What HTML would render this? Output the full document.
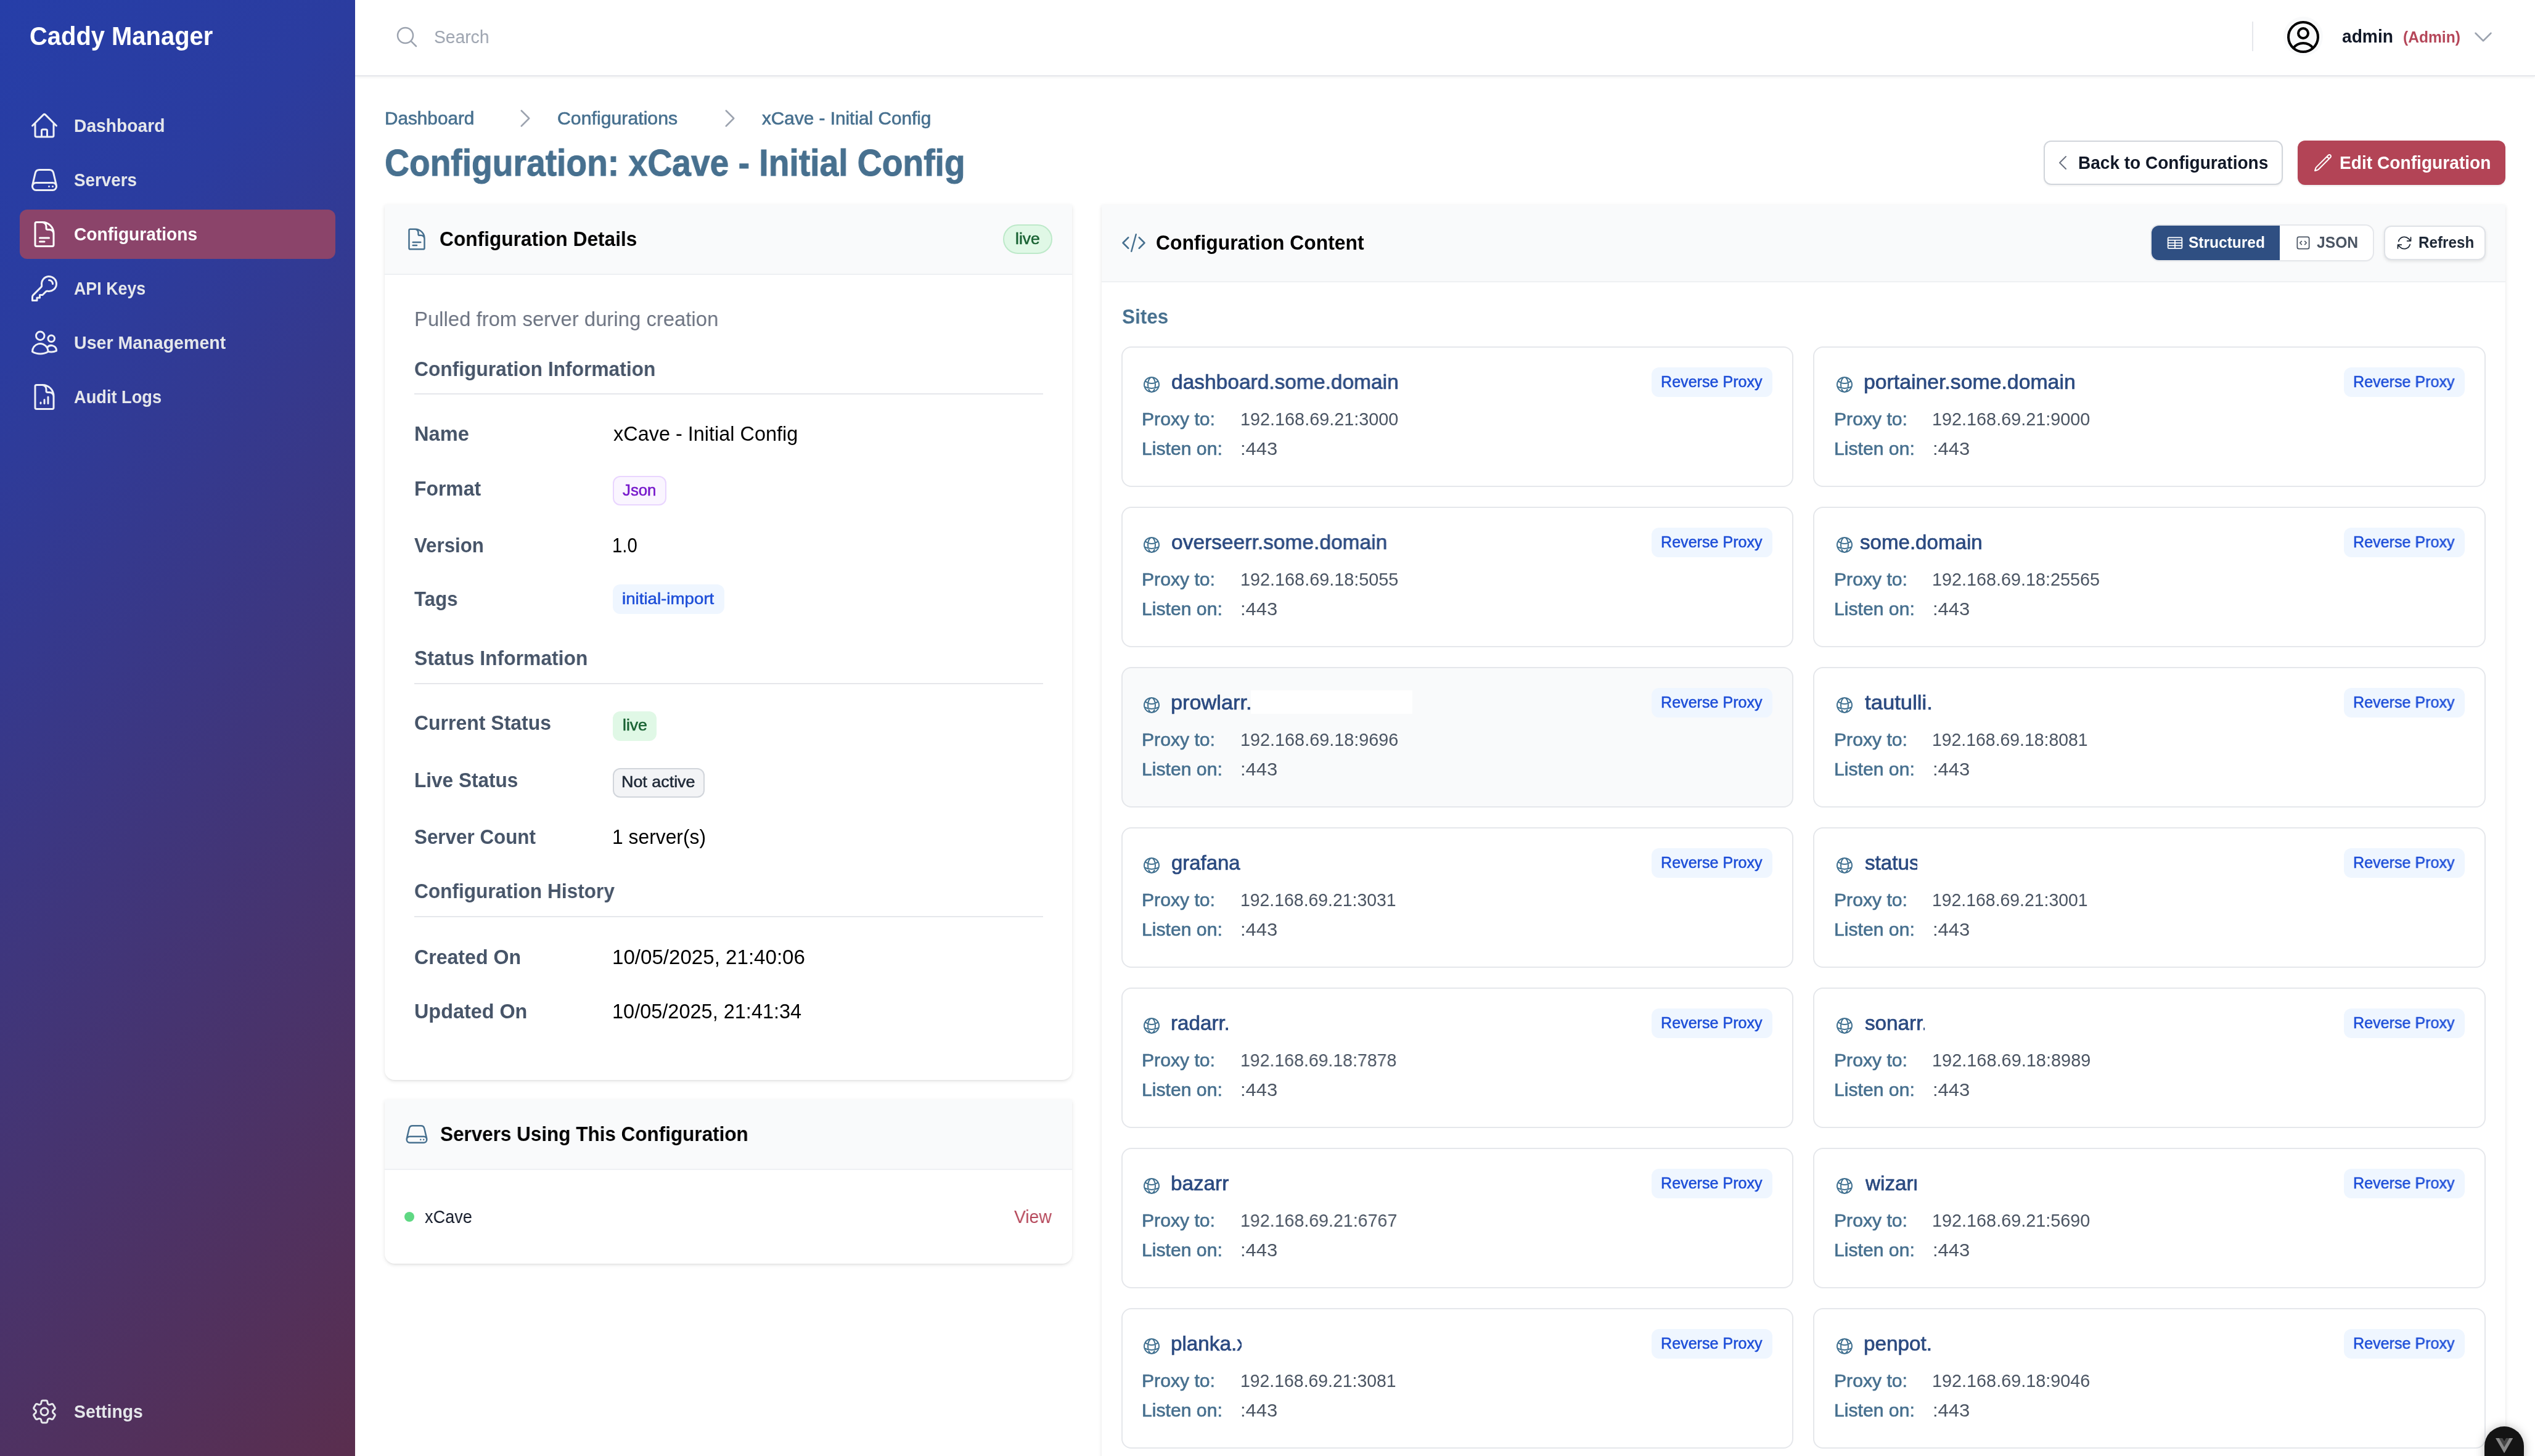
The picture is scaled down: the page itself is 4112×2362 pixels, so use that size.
<!DOCTYPE html><html><head><meta charset="utf-8"><meta name="viewport" content="width=4112"><title>Caddy Manager</title><style>html,body{margin:0;padding:0}body{width:4112px;height:2362px;overflow:hidden;position:relative;background:#fff;font-family:"Liberation Sans",sans-serif;}.t{position:absolute;line-height:1;white-space:pre}.t span{display:inline-block;transform-origin:0 50%}#w{position:absolute;left:0;top:0;width:4112px;height:2362px;overflow:hidden;will-change:transform}</style></head><body><div id="w">
<div style="position:absolute;left:0px;top:0px;width:576px;height:2362px;background:linear-gradient(135deg,#263ea8 0%,#2b3c9f 20%,#5a2e4e 100%);"></div>
<svg style="position:absolute;left:48px;top:180px;" width="48" height="48" viewBox="0 0 24 24" fill="none" stroke="#eef0f6" stroke-width="1.5" stroke-linecap="round" stroke-linejoin="round"><path d="m2.25 12 8.954-8.955c.44-.439 1.152-.439 1.591 0L21.75 12M4.5 9.75v10.125c0 .621.504 1.125 1.125 1.125H9.75v-4.875c0-.621.504-1.125 1.125-1.125h2.25c.621 0 1.125.504 1.125 1.125V21h4.125c.621 0 1.125-.504 1.125-1.125V9.75M8.25 21h8.25"/></svg>
<svg style="position:absolute;left:48px;top:268px;" width="48" height="48" viewBox="0 0 24 24" fill="none" stroke="#eef0f6" stroke-width="1.5" stroke-linecap="round" stroke-linejoin="round"><path d="M21.75 17.25v-.228a4.5 4.5 0 0 0-.12-1.03l-2.268-9.64a3.375 3.375 0 0 0-3.285-2.602H7.923a3.375 3.375 0 0 0-3.285 2.602l-2.268 9.64a4.5 4.5 0 0 0-.12 1.03v.228m19.5 0a3 3 0 0 1-3 3H5.25a3 3 0 0 1-3-3m19.5 0a3 3 0 0 0-3-3H5.25a3 3 0 0 0-3 3m16.5 0h.008v.008h-.008v-.008Zm-3 0h.008v.008h-.008v-.008Z"/></svg>
<div style="position:absolute;left:32px;top:340px;width:512px;height:80px;background:#8b446a;border-radius:12px;"></div>
<svg style="position:absolute;left:48px;top:356px;" width="48" height="48" viewBox="0 0 24 24" fill="none" stroke="#fff" stroke-width="1.5" stroke-linecap="round" stroke-linejoin="round"><path d="M19.5 14.25v-2.625a3.375 3.375 0 0 0-3.375-3.375h-1.5A1.125 1.125 0 0 1 13.5 7.125v-1.5a3.375 3.375 0 0 0-3.375-3.375H8.25m0 12.75h7.5m-7.5 3H12M10.5 2.25H5.625c-.621 0-1.125.504-1.125 1.125v17.25c0 .621.504 1.125 1.125 1.125h12.75c.621 0 1.125-.504 1.125-1.125V11.25a9 9 0 0 0-9-9Z"/></svg>
<svg style="position:absolute;left:48px;top:444px;" width="48" height="48" viewBox="0 0 24 24" fill="none" stroke="#eef0f6" stroke-width="1.5" stroke-linecap="round" stroke-linejoin="round"><path d="M15.75 5.25a3 3 0 0 1 3 3m3 0a6 6 0 0 1-7.029 5.912c-.563-.097-1.159.026-1.563.43L10.5 17.25H8.25v2.25H6v2.25H2.25v-2.818c0-.597.237-1.17.659-1.591l6.499-6.499c.404-.404.527-1 .43-1.563A6 6 0 1 1 21.75 8.25Z"/></svg>
<svg style="position:absolute;left:48px;top:532px;" width="48" height="48" viewBox="0 0 24 24" fill="none" stroke="#eef0f6" stroke-width="1.5" stroke-linecap="round" stroke-linejoin="round"><path d="M15 19.128a9.38 9.38 0 0 0 2.625.372 9.337 9.337 0 0 0 4.121-.952 4.125 4.125 0 0 0-7.533-2.493M15 19.128v-.003c0-1.113-.285-2.16-.786-3.07M15 19.128v.106A12.318 12.318 0 0 1 8.624 21c-2.331 0-4.512-.645-6.374-1.766l-.001-.109a6.375 6.375 0 0 1 11.964-3.07M12 6.375a3.375 3.375 0 1 1-6.75 0 3.375 3.375 0 0 1 6.75 0Zm8.25 2.25a2.625 2.625 0 1 1-5.25 0 2.625 2.625 0 0 1 5.25 0Z"/></svg>
<svg style="position:absolute;left:48px;top:620px;" width="48" height="48" viewBox="0 0 24 24" fill="none" stroke="#eef0f6" stroke-width="1.5" stroke-linecap="round" stroke-linejoin="round"><path d="M19.5 14.25v-2.625a3.375 3.375 0 0 0-3.375-3.375h-1.5A1.125 1.125 0 0 1 13.5 7.125v-1.5a3.375 3.375 0 0 0-3.375-3.375H8.25M9 16.5v.75m3-3v3M15 12v5.25m-4.5-15H5.625c-.621 0-1.125.504-1.125 1.125v17.25c0 .621.504 1.125 1.125 1.125h12.75c.621 0 1.125-.504 1.125-1.125V11.25a9 9 0 0 0-9-9Z"/></svg>
<svg style="position:absolute;left:48px;top:2266px;" width="48" height="48" viewBox="0 0 24 24" fill="none" stroke="#e5e7eb" stroke-width="1.5" stroke-linecap="round" stroke-linejoin="round"><path d="M9.594 3.94c.09-.542.56-.94 1.11-.94h2.593c.55 0 1.02.398 1.11.94l.213 1.281c.063.374.313.686.645.87.074.04.147.083.22.127.325.196.72.257 1.075.124l1.217-.456a1.125 1.125 0 0 1 1.37.49l1.296 2.247a1.125 1.125 0 0 1-.26 1.431l-1.003.827c-.293.241-.438.613-.43.992a7.723 7.723 0 0 1 0 .255c-.008.378.137.75.43.991l1.004.827c.424.35.534.955.26 1.43l-1.298 2.247a1.125 1.125 0 0 1-1.369.491l-1.217-.456c-.355-.133-.75-.072-1.076.124a6.47 6.47 0 0 1-.22.128c-.331.183-.581.495-.644.869l-.213 1.281c-.09.543-.56.94-1.11.94h-2.594c-.55 0-1.019-.398-1.11-.94l-.213-1.281c-.062-.374-.312-.686-.644-.87a6.52 6.52 0 0 1-.22-.127c-.325-.196-.72-.257-1.076-.124l-1.217.456a1.125 1.125 0 0 1-1.369-.49l-1.297-2.247a1.125 1.125 0 0 1 .26-1.431l1.004-.827c.292-.24.437-.613.43-.991a6.932 6.932 0 0 1 0-.255c.007-.38-.138-.751-.43-.992l-1.004-.827a1.125 1.125 0 0 1-.26-1.43l1.297-2.247a1.125 1.125 0 0 1 1.37-.491l1.216.456c.356.133.751.072 1.076-.124.072-.044.146-.086.22-.128.332-.183.582-.495.644-.869l.214-1.28Z"/><path d="M15 12a3 3 0 1 1-6 0 3 3 0 0 1 6 0Z"/></svg>
<div style="position:absolute;left:576px;top:0px;width:3536px;height:122px;background:#fff;border-bottom:2px solid #e5e7eb;box-shadow:0 2px 4px rgba(0,0,0,.05);"></div>
<svg style="position:absolute;left:640px;top:40px;" width="40" height="40" viewBox="0 0 24 24" fill="none" stroke="#9ca3af" stroke-width="1.5" stroke-linecap="round" stroke-linejoin="round"><path d="m21 21-5.197-5.197m0 0A7.5 7.5 0 1 0 5.196 5.196a7.5 7.5 0 0 0 10.607 10.607Z"/></svg>
<div style="position:absolute;left:3653px;top:35px;width:2px;height:48px;background:#e5e7eb;"></div>
<div style="position:absolute;left:3704px;top:27px;width:64px;height:64px;background:#f9fafb;border-radius:50%;"></div>
<svg style="position:absolute;left:3704px;top:28px;" width="64" height="64" viewBox="0 0 24 24" fill="none" stroke="#000" stroke-width="1.5" stroke-linecap="round" stroke-linejoin="round"><path d="M17.982 18.725A7.488 7.488 0 0 0 12 15.75a7.488 7.488 0 0 0-5.982 2.975m11.963 0a9 9 0 1 0-11.963 0m11.963 0A8.966 8.966 0 0 1 12 21a8.966 8.966 0 0 1-5.982-2.275M15 9.75a3 3 0 1 1-6 0 3 3 0 0 1 6 0Z"/></svg>
<svg style="position:absolute;left:4008px;top:40px;" width="40" height="40" viewBox="0 0 24 24" fill="none" stroke="#9ca3af" stroke-width="1.5" stroke-linecap="round" stroke-linejoin="round"><path d="m19.5 8.25-7.5 7.5-7.5-7.5"/></svg>
<svg style="position:absolute;left:832px;top:172px;" width="40" height="40" viewBox="0 0 24 24" fill="none" stroke="#9ca3af" stroke-width="1.5" stroke-linecap="round" stroke-linejoin="round"><path d="m8.25 4.5 7.5 7.5-7.5 7.5"/></svg>
<svg style="position:absolute;left:1164px;top:172px;" width="40" height="40" viewBox="0 0 24 24" fill="none" stroke="#9ca3af" stroke-width="1.5" stroke-linecap="round" stroke-linejoin="round"><path d="m8.25 4.5 7.5 7.5-7.5 7.5"/></svg>
<div style="position:absolute;left:3315px;top:228px;width:388px;height:72px;background:#fff;border:2px solid #d1d5db;border-radius:12px;box-sizing:border-box;box-shadow:0 2px 3px rgba(0,0,0,.05);"></div>
<svg style="position:absolute;left:3330px;top:248px;" width="32" height="32" viewBox="0 0 24 24" fill="none" stroke="#6b7280" stroke-width="1.5" stroke-linecap="round" stroke-linejoin="round"><path d="M15.75 19.5 8.25 12l7.5-7.5"/></svg>
<div style="position:absolute;left:3727px;top:228px;width:337px;height:72px;background:#b34456;border-radius:12px;box-shadow:0 2px 3px rgba(0,0,0,.08);"></div>
<svg style="position:absolute;left:3752px;top:248px;" width="32" height="32" viewBox="0 0 24 24" fill="none" stroke="#fff" stroke-width="1.5" stroke-linecap="round" stroke-linejoin="round"><path d="m16.862 4.487 1.687-1.688a1.875 1.875 0 1 1 2.652 2.652L6.832 19.82a4.5 4.5 0 0 1-1.897 1.13l-2.685.8.8-2.685a4.5 4.5 0 0 1 1.13-1.897L16.863 4.487Zm0 0L19.5 7.125"/></svg>
<div style="position:absolute;left:624px;top:332px;width:1115px;height:1420px;background:#fff;border-radius:0 0 16px 16px;box-shadow:0 2px 6px rgba(0,0,0,.1),0 2px 4px -2px rgba(0,0,0,.1);"><div style="height:114px;background:#f9fafb;border-bottom:2px solid #eef0f3;box-sizing:border-box;"></div></div>
<svg style="position:absolute;left:656px;top:368px;" width="40" height="40" viewBox="0 0 24 24" fill="none" stroke="#47708f" stroke-width="1.5" stroke-linecap="round" stroke-linejoin="round"><path d="M19.5 14.25v-2.625a3.375 3.375 0 0 0-3.375-3.375h-1.5A1.125 1.125 0 0 1 13.5 7.125v-1.5a3.375 3.375 0 0 0-3.375-3.375H8.25m0 12.75h7.5m-7.5 3H12M10.5 2.25H5.625c-.621 0-1.125.504-1.125 1.125v17.25c0 .621.504 1.125 1.125 1.125h12.75c.621 0 1.125-.504 1.125-1.125V11.25a9 9 0 0 0-9-9Z"/></svg>
<div style="position:absolute;left:1627px;top:364px;width:80px;height:48px;background:#e0f8e6;border:2px solid #bde9c9;border-radius:24px;box-sizing:border-box;"></div>
<div style="position:absolute;left:672px;top:638px;width:1020px;height:2px;background:#e5e7eb;"></div>
<div style="position:absolute;left:994px;top:772px;width:87px;height:48px;background:#faf5ff;border:2px solid #e9d5ff;border-radius:12px;box-sizing:border-box;"></div>
<div style="position:absolute;left:994px;top:948px;width:181px;height:48px;background:#eff6ff;border-radius:12px;"></div>
<div style="position:absolute;left:672px;top:1108px;width:1020px;height:2px;background:#e5e7eb;"></div>
<div style="position:absolute;left:994px;top:1154px;width:71px;height:48px;background:#e0f8e6;border-radius:12px;"></div>
<div style="position:absolute;left:994px;top:1246px;width:149px;height:48px;background:#f3f4f6;border:2px solid #d1d5db;border-radius:12px;box-sizing:border-box;"></div>
<div style="position:absolute;left:672px;top:1486px;width:1020px;height:2px;background:#e5e7eb;"></div>
<div style="position:absolute;left:624px;top:1784px;width:1115px;height:266px;background:#fff;border-radius:0 0 16px 16px;box-shadow:0 2px 6px rgba(0,0,0,.1),0 2px 4px -2px rgba(0,0,0,.1);"><div style="height:114px;background:#f9fafb;border-bottom:2px solid #eef0f3;box-sizing:border-box;"></div></div>
<svg style="position:absolute;left:656px;top:1820px;" width="40" height="40" viewBox="0 0 24 24" fill="none" stroke="#47708f" stroke-width="1.5" stroke-linecap="round" stroke-linejoin="round"><path d="M21.75 17.25v-.228a4.5 4.5 0 0 0-.12-1.03l-2.268-9.64a3.375 3.375 0 0 0-3.285-2.602H7.923a3.375 3.375 0 0 0-3.285 2.602l-2.268 9.64a4.5 4.5 0 0 0-.12 1.03v.228m19.5 0a3 3 0 0 1-3 3H5.25a3 3 0 0 1-3-3m19.5 0a3 3 0 0 0-3-3H5.25a3 3 0 0 0-3 3m16.5 0h.008v.008h-.008v-.008Zm-3 0h.008v.008h-.008v-.008Z"/></svg>
<div style="position:absolute;left:656px;top:1966px;width:16px;height:16px;background:#5fd883;border-radius:50%;"></div>
<div style="position:absolute;left:1786.67px;top:332px;width:2277.33px;height:2100px;background:#fff;border-radius:0 0 16px 16px;box-shadow:0 2px 6px rgba(0,0,0,.1),0 2px 4px -2px rgba(0,0,0,.1);border-radius:0;"><div style="height:126px;background:#f9fafb;border-bottom:2px solid #eef0f3;box-sizing:border-box;"></div></div>
<svg style="position:absolute;left:1818.67px;top:374px;" width="40" height="40" viewBox="0 0 24 24" fill="none" stroke="#47708f" stroke-width="1.5" stroke-linecap="round" stroke-linejoin="round"><path d="M17.25 6.75 22.5 12l-5.25 5.25m-10.5 0L1.5 12l5.25-5.25m7.5-3-4.5 16.5"/></svg>
<div style="position:absolute;left:3490px;top:366px;width:359px;height:56px;background:#fff;border-radius:12px;box-shadow:0 0 0 2px #e5e7eb,0 2px 3px rgba(0,0,0,.06);"></div>
<div style="position:absolute;left:3490px;top:366px;width:208px;height:56px;background:#2f4f82;border-radius:12px 0 0 12px;"></div>
<svg style="position:absolute;left:3514px;top:380px;" width="28" height="28" viewBox="0 0 24 24" fill="none" stroke="#fff" stroke-width="1.5" stroke-linecap="round" stroke-linejoin="round"><path d="M3.375 19.5h17.25m-17.25 0a1.125 1.125 0 0 1-1.125-1.125M3.375 19.5h7.5c.621 0 1.125-.504 1.125-1.125m-9.75 0V5.625m0 12.75v-1.5c0-.621.504-1.125 1.125-1.125m18.375 2.625V5.625m0 12.75c0 .621-.504 1.125-1.125 1.125m1.125-1.125v-1.5c0-.621-.504-1.125-1.125-1.125m0 3.75h-7.5A1.125 1.125 0 0 1 12 18.375m9.75-12.75c0-.621-.504-1.125-1.125-1.125H3.375c-.621 0-1.125.504-1.125 1.125m19.5 0v1.5c0 .621-.504 1.125-1.125 1.125M2.25 5.625v1.5c0 .621.504 1.125 1.125 1.125m0 0h17.25m-17.25 0h7.5c.621 0 1.125.504 1.125 1.125M3.375 8.25c-.621 0-1.125.504-1.125 1.125v1.5c0 .621.504 1.125 1.125 1.125m17.25-3.75h-7.5c-.621 0-1.125.504-1.125 1.125m8.625-1.125c.621 0 1.125.504 1.125 1.125v1.5c0 .621-.504 1.125-1.125 1.125m-17.25 0h7.5m-7.5 0c-.621 0-1.125.504-1.125 1.125v1.5c0 .621.504 1.125 1.125 1.125M12 10.875v-1.5m0 1.5c0 .621-.504 1.125-1.125 1.125M12 10.875c0 .621.504 1.125 1.125 1.125m-2.25 0c.621 0 1.125.504 1.125 1.125M13.125 12h7.5m-7.5 0c-.621 0-1.125.504-1.125 1.125M20.625 12c.621 0 1.125.504 1.125 1.125v1.5c0 .621-.504 1.125-1.125 1.125m-17.25 0h7.5M12 14.625v-1.5m0 1.5c0 .621-.504 1.125-1.125 1.125M12 14.625c0 .621.504 1.125 1.125 1.125m-2.25 0c.621 0 1.125.504 1.125 1.125m0 1.5v-1.5m0 0c0-.621.504-1.125 1.125-1.125m0 0h7.5"/></svg>
<svg style="position:absolute;left:3722px;top:380px;" width="28" height="28" viewBox="0 0 24 24" fill="none" stroke="#4b5563" stroke-width="1.5" stroke-linecap="round" stroke-linejoin="round"><path d="M14.25 9.75 16.5 12l-2.25 2.25m-4.5 0L7.5 12l2.25-2.25M6 20.25h12A2.25 2.25 0 0 0 20.25 18V6A2.25 2.25 0 0 0 18 3.75H6A2.25 2.25 0 0 0 3.75 6v12A2.25 2.25 0 0 0 6 20.25Z"/></svg>
<div style="position:absolute;left:3867px;top:366px;width:165px;height:56px;background:#fff;border:2px solid #dfe2e7;border-radius:12px;box-sizing:border-box;box-shadow:0 2px 5px rgba(0,0,0,.10);"></div>
<svg style="position:absolute;left:3885.5px;top:380px;" width="28" height="28" viewBox="0 0 24 24" fill="none" stroke="#1f2937" stroke-width="1.5" stroke-linecap="round" stroke-linejoin="round"><path d="M16.023 9.348h4.992v-.001M2.985 19.644v-4.992m0 0h4.992m-4.993 0 3.181 3.183a8.25 8.25 0 0 0 13.803-3.7M4.031 9.865a8.25 8.25 0 0 1 13.803-3.7l3.181 3.182m0-4.991v4.99"/></svg>
<div style="position:absolute;left:1818.67px;top:562px;width:1090.67px;height:228px;background:#fff;border:2px solid #e5e7eb;border-radius:16px;box-sizing:border-box;"></div>
<svg style="position:absolute;left:1852.17px;top:608px;" width="32" height="32" viewBox="0 0 24 24" fill="none" stroke="#3f6f8f" stroke-width="1.5" stroke-linecap="round" stroke-linejoin="round"><path d="M12 21a9.004 9.004 0 0 0 8.716-6.747M12 21a9.004 9.004 0 0 1-8.716-6.747M12 21c2.485 0 4.5-4.03 4.5-9S14.485 3 12 3m0 18c-2.485 0-4.5-4.03-4.5-9S9.515 3 12 3m0 0a8.997 8.997 0 0 1 7.843 4.582M12 3a8.997 8.997 0 0 0-7.843 4.582m15.686 0A11.953 11.953 0 0 1 12 10.5c-2.998 0-5.74-1.1-7.843-2.918m15.686 0A8.959 8.959 0 0 1 21 12c0 .778-.099 1.533-.284 2.253m0 0A17.919 17.919 0 0 1 12 16.5c-3.162 0-6.133-.815-8.716-2.247m0 0A9.015 9.015 0 0 1 3 12c0-1.605.42-3.113 1.157-4.418"/></svg>
<div style="position:absolute;left:2678.9700000000003px;top:596px;width:196.4px;height:48px;background:#eff6ff;border-radius:12px;"></div>
<div style="position:absolute;left:2941.33px;top:562px;width:1090.67px;height:228px;background:#fff;border:2px solid #e5e7eb;border-radius:16px;box-sizing:border-box;"></div>
<svg style="position:absolute;left:2975.93px;top:608px;" width="32" height="32" viewBox="0 0 24 24" fill="none" stroke="#3f6f8f" stroke-width="1.5" stroke-linecap="round" stroke-linejoin="round"><path d="M12 21a9.004 9.004 0 0 0 8.716-6.747M12 21a9.004 9.004 0 0 1-8.716-6.747M12 21c2.485 0 4.5-4.03 4.5-9S14.485 3 12 3m0 18c-2.485 0-4.5-4.03-4.5-9S9.515 3 12 3m0 0a8.997 8.997 0 0 1 7.843 4.582M12 3a8.997 8.997 0 0 0-7.843 4.582m15.686 0A11.953 11.953 0 0 1 12 10.5c-2.998 0-5.74-1.1-7.843-2.918m15.686 0A8.959 8.959 0 0 1 21 12c0 .778-.099 1.533-.284 2.253m0 0A17.919 17.919 0 0 1 12 16.5c-3.162 0-6.133-.815-8.716-2.247m0 0A9.015 9.015 0 0 1 3 12c0-1.605.42-3.113 1.157-4.418"/></svg>
<div style="position:absolute;left:3801.63px;top:596px;width:196.4px;height:48px;background:#eff6ff;border-radius:12px;"></div>
<div style="position:absolute;left:1818.67px;top:822px;width:1090.67px;height:228px;background:#fff;border:2px solid #e5e7eb;border-radius:16px;box-sizing:border-box;"></div>
<svg style="position:absolute;left:1852.17px;top:868px;" width="32" height="32" viewBox="0 0 24 24" fill="none" stroke="#3f6f8f" stroke-width="1.5" stroke-linecap="round" stroke-linejoin="round"><path d="M12 21a9.004 9.004 0 0 0 8.716-6.747M12 21a9.004 9.004 0 0 1-8.716-6.747M12 21c2.485 0 4.5-4.03 4.5-9S14.485 3 12 3m0 18c-2.485 0-4.5-4.03-4.5-9S9.515 3 12 3m0 0a8.997 8.997 0 0 1 7.843 4.582M12 3a8.997 8.997 0 0 0-7.843 4.582m15.686 0A11.953 11.953 0 0 1 12 10.5c-2.998 0-5.74-1.1-7.843-2.918m15.686 0A8.959 8.959 0 0 1 21 12c0 .778-.099 1.533-.284 2.253m0 0A17.919 17.919 0 0 1 12 16.5c-3.162 0-6.133-.815-8.716-2.247m0 0A9.015 9.015 0 0 1 3 12c0-1.605.42-3.113 1.157-4.418"/></svg>
<div style="position:absolute;left:2678.9700000000003px;top:856px;width:196.4px;height:48px;background:#eff6ff;border-radius:12px;"></div>
<div style="position:absolute;left:2941.33px;top:822px;width:1090.67px;height:228px;background:#fff;border:2px solid #e5e7eb;border-radius:16px;box-sizing:border-box;"></div>
<svg style="position:absolute;left:2975.93px;top:868px;" width="32" height="32" viewBox="0 0 24 24" fill="none" stroke="#3f6f8f" stroke-width="1.5" stroke-linecap="round" stroke-linejoin="round"><path d="M12 21a9.004 9.004 0 0 0 8.716-6.747M12 21a9.004 9.004 0 0 1-8.716-6.747M12 21c2.485 0 4.5-4.03 4.5-9S14.485 3 12 3m0 18c-2.485 0-4.5-4.03-4.5-9S9.515 3 12 3m0 0a8.997 8.997 0 0 1 7.843 4.582M12 3a8.997 8.997 0 0 0-7.843 4.582m15.686 0A11.953 11.953 0 0 1 12 10.5c-2.998 0-5.74-1.1-7.843-2.918m15.686 0A8.959 8.959 0 0 1 21 12c0 .778-.099 1.533-.284 2.253m0 0A17.919 17.919 0 0 1 12 16.5c-3.162 0-6.133-.815-8.716-2.247m0 0A9.015 9.015 0 0 1 3 12c0-1.605.42-3.113 1.157-4.418"/></svg>
<div style="position:absolute;left:3801.63px;top:856px;width:196.4px;height:48px;background:#eff6ff;border-radius:12px;"></div>
<div style="position:absolute;left:1818.67px;top:1082px;width:1090.67px;height:228px;background:#f9fafb;border:2px solid #e5e7eb;border-radius:16px;box-sizing:border-box;"></div>
<div style="position:absolute;left:2029.3px;top:1120px;width:262px;height:38.4px;background:#fff;"></div>
<svg style="position:absolute;left:1852.17px;top:1128px;" width="32" height="32" viewBox="0 0 24 24" fill="none" stroke="#3f6f8f" stroke-width="1.5" stroke-linecap="round" stroke-linejoin="round"><path d="M12 21a9.004 9.004 0 0 0 8.716-6.747M12 21a9.004 9.004 0 0 1-8.716-6.747M12 21c2.485 0 4.5-4.03 4.5-9S14.485 3 12 3m0 18c-2.485 0-4.5-4.03-4.5-9S9.515 3 12 3m0 0a8.997 8.997 0 0 1 7.843 4.582M12 3a8.997 8.997 0 0 0-7.843 4.582m15.686 0A11.953 11.953 0 0 1 12 10.5c-2.998 0-5.74-1.1-7.843-2.918m15.686 0A8.959 8.959 0 0 1 21 12c0 .778-.099 1.533-.284 2.253m0 0A17.919 17.919 0 0 1 12 16.5c-3.162 0-6.133-.815-8.716-2.247m0 0A9.015 9.015 0 0 1 3 12c0-1.605.42-3.113 1.157-4.418"/></svg>
<div style="position:absolute;left:2678.9700000000003px;top:1116px;width:196.4px;height:48px;background:#eff6ff;border-radius:12px;"></div>
<div style="position:absolute;left:2941.33px;top:1082px;width:1090.67px;height:228px;background:#fff;border:2px solid #e5e7eb;border-radius:16px;box-sizing:border-box;"></div>
<svg style="position:absolute;left:2975.93px;top:1128px;" width="32" height="32" viewBox="0 0 24 24" fill="none" stroke="#3f6f8f" stroke-width="1.5" stroke-linecap="round" stroke-linejoin="round"><path d="M12 21a9.004 9.004 0 0 0 8.716-6.747M12 21a9.004 9.004 0 0 1-8.716-6.747M12 21c2.485 0 4.5-4.03 4.5-9S14.485 3 12 3m0 18c-2.485 0-4.5-4.03-4.5-9S9.515 3 12 3m0 0a8.997 8.997 0 0 1 7.843 4.582M12 3a8.997 8.997 0 0 0-7.843 4.582m15.686 0A11.953 11.953 0 0 1 12 10.5c-2.998 0-5.74-1.1-7.843-2.918m15.686 0A8.959 8.959 0 0 1 21 12c0 .778-.099 1.533-.284 2.253m0 0A17.919 17.919 0 0 1 12 16.5c-3.162 0-6.133-.815-8.716-2.247m0 0A9.015 9.015 0 0 1 3 12c0-1.605.42-3.113 1.157-4.418"/></svg>
<div style="position:absolute;left:3801.63px;top:1116px;width:196.4px;height:48px;background:#eff6ff;border-radius:12px;"></div>
<div style="position:absolute;left:1818.67px;top:1342px;width:1090.67px;height:228px;background:#fff;border:2px solid #e5e7eb;border-radius:16px;box-sizing:border-box;"></div>
<svg style="position:absolute;left:1852.17px;top:1388px;" width="32" height="32" viewBox="0 0 24 24" fill="none" stroke="#3f6f8f" stroke-width="1.5" stroke-linecap="round" stroke-linejoin="round"><path d="M12 21a9.004 9.004 0 0 0 8.716-6.747M12 21a9.004 9.004 0 0 1-8.716-6.747M12 21c2.485 0 4.5-4.03 4.5-9S14.485 3 12 3m0 18c-2.485 0-4.5-4.03-4.5-9S9.515 3 12 3m0 0a8.997 8.997 0 0 1 7.843 4.582M12 3a8.997 8.997 0 0 0-7.843 4.582m15.686 0A11.953 11.953 0 0 1 12 10.5c-2.998 0-5.74-1.1-7.843-2.918m15.686 0A8.959 8.959 0 0 1 21 12c0 .778-.099 1.533-.284 2.253m0 0A17.919 17.919 0 0 1 12 16.5c-3.162 0-6.133-.815-8.716-2.247m0 0A9.015 9.015 0 0 1 3 12c0-1.605.42-3.113 1.157-4.418"/></svg>
<div style="position:absolute;left:2678.9700000000003px;top:1376px;width:196.4px;height:48px;background:#eff6ff;border-radius:12px;"></div>
<div style="position:absolute;left:2941.33px;top:1342px;width:1090.67px;height:228px;background:#fff;border:2px solid #e5e7eb;border-radius:16px;box-sizing:border-box;"></div>
<svg style="position:absolute;left:2975.93px;top:1388px;" width="32" height="32" viewBox="0 0 24 24" fill="none" stroke="#3f6f8f" stroke-width="1.5" stroke-linecap="round" stroke-linejoin="round"><path d="M12 21a9.004 9.004 0 0 0 8.716-6.747M12 21a9.004 9.004 0 0 1-8.716-6.747M12 21c2.485 0 4.5-4.03 4.5-9S14.485 3 12 3m0 18c-2.485 0-4.5-4.03-4.5-9S9.515 3 12 3m0 0a8.997 8.997 0 0 1 7.843 4.582M12 3a8.997 8.997 0 0 0-7.843 4.582m15.686 0A11.953 11.953 0 0 1 12 10.5c-2.998 0-5.74-1.1-7.843-2.918m15.686 0A8.959 8.959 0 0 1 21 12c0 .778-.099 1.533-.284 2.253m0 0A17.919 17.919 0 0 1 12 16.5c-3.162 0-6.133-.815-8.716-2.247m0 0A9.015 9.015 0 0 1 3 12c0-1.605.42-3.113 1.157-4.418"/></svg>
<div style="position:absolute;left:3801.63px;top:1376px;width:196.4px;height:48px;background:#eff6ff;border-radius:12px;"></div>
<div style="position:absolute;left:1818.67px;top:1602px;width:1090.67px;height:228px;background:#fff;border:2px solid #e5e7eb;border-radius:16px;box-sizing:border-box;"></div>
<svg style="position:absolute;left:1852.17px;top:1648px;" width="32" height="32" viewBox="0 0 24 24" fill="none" stroke="#3f6f8f" stroke-width="1.5" stroke-linecap="round" stroke-linejoin="round"><path d="M12 21a9.004 9.004 0 0 0 8.716-6.747M12 21a9.004 9.004 0 0 1-8.716-6.747M12 21c2.485 0 4.5-4.03 4.5-9S14.485 3 12 3m0 18c-2.485 0-4.5-4.03-4.5-9S9.515 3 12 3m0 0a8.997 8.997 0 0 1 7.843 4.582M12 3a8.997 8.997 0 0 0-7.843 4.582m15.686 0A11.953 11.953 0 0 1 12 10.5c-2.998 0-5.74-1.1-7.843-2.918m15.686 0A8.959 8.959 0 0 1 21 12c0 .778-.099 1.533-.284 2.253m0 0A17.919 17.919 0 0 1 12 16.5c-3.162 0-6.133-.815-8.716-2.247m0 0A9.015 9.015 0 0 1 3 12c0-1.605.42-3.113 1.157-4.418"/></svg>
<div style="position:absolute;left:2678.9700000000003px;top:1636px;width:196.4px;height:48px;background:#eff6ff;border-radius:12px;"></div>
<div style="position:absolute;left:2941.33px;top:1602px;width:1090.67px;height:228px;background:#fff;border:2px solid #e5e7eb;border-radius:16px;box-sizing:border-box;"></div>
<svg style="position:absolute;left:2975.93px;top:1648px;" width="32" height="32" viewBox="0 0 24 24" fill="none" stroke="#3f6f8f" stroke-width="1.5" stroke-linecap="round" stroke-linejoin="round"><path d="M12 21a9.004 9.004 0 0 0 8.716-6.747M12 21a9.004 9.004 0 0 1-8.716-6.747M12 21c2.485 0 4.5-4.03 4.5-9S14.485 3 12 3m0 18c-2.485 0-4.5-4.03-4.5-9S9.515 3 12 3m0 0a8.997 8.997 0 0 1 7.843 4.582M12 3a8.997 8.997 0 0 0-7.843 4.582m15.686 0A11.953 11.953 0 0 1 12 10.5c-2.998 0-5.74-1.1-7.843-2.918m15.686 0A8.959 8.959 0 0 1 21 12c0 .778-.099 1.533-.284 2.253m0 0A17.919 17.919 0 0 1 12 16.5c-3.162 0-6.133-.815-8.716-2.247m0 0A9.015 9.015 0 0 1 3 12c0-1.605.42-3.113 1.157-4.418"/></svg>
<div style="position:absolute;left:3801.63px;top:1636px;width:196.4px;height:48px;background:#eff6ff;border-radius:12px;"></div>
<div style="position:absolute;left:1818.67px;top:1862px;width:1090.67px;height:228px;background:#fff;border:2px solid #e5e7eb;border-radius:16px;box-sizing:border-box;"></div>
<svg style="position:absolute;left:1852.17px;top:1908px;" width="32" height="32" viewBox="0 0 24 24" fill="none" stroke="#3f6f8f" stroke-width="1.5" stroke-linecap="round" stroke-linejoin="round"><path d="M12 21a9.004 9.004 0 0 0 8.716-6.747M12 21a9.004 9.004 0 0 1-8.716-6.747M12 21c2.485 0 4.5-4.03 4.5-9S14.485 3 12 3m0 18c-2.485 0-4.5-4.03-4.5-9S9.515 3 12 3m0 0a8.997 8.997 0 0 1 7.843 4.582M12 3a8.997 8.997 0 0 0-7.843 4.582m15.686 0A11.953 11.953 0 0 1 12 10.5c-2.998 0-5.74-1.1-7.843-2.918m15.686 0A8.959 8.959 0 0 1 21 12c0 .778-.099 1.533-.284 2.253m0 0A17.919 17.919 0 0 1 12 16.5c-3.162 0-6.133-.815-8.716-2.247m0 0A9.015 9.015 0 0 1 3 12c0-1.605.42-3.113 1.157-4.418"/></svg>
<div style="position:absolute;left:2678.9700000000003px;top:1896px;width:196.4px;height:48px;background:#eff6ff;border-radius:12px;"></div>
<div style="position:absolute;left:2941.33px;top:1862px;width:1090.67px;height:228px;background:#fff;border:2px solid #e5e7eb;border-radius:16px;box-sizing:border-box;"></div>
<svg style="position:absolute;left:2975.93px;top:1908px;" width="32" height="32" viewBox="0 0 24 24" fill="none" stroke="#3f6f8f" stroke-width="1.5" stroke-linecap="round" stroke-linejoin="round"><path d="M12 21a9.004 9.004 0 0 0 8.716-6.747M12 21a9.004 9.004 0 0 1-8.716-6.747M12 21c2.485 0 4.5-4.03 4.5-9S14.485 3 12 3m0 18c-2.485 0-4.5-4.03-4.5-9S9.515 3 12 3m0 0a8.997 8.997 0 0 1 7.843 4.582M12 3a8.997 8.997 0 0 0-7.843 4.582m15.686 0A11.953 11.953 0 0 1 12 10.5c-2.998 0-5.74-1.1-7.843-2.918m15.686 0A8.959 8.959 0 0 1 21 12c0 .778-.099 1.533-.284 2.253m0 0A17.919 17.919 0 0 1 12 16.5c-3.162 0-6.133-.815-8.716-2.247m0 0A9.015 9.015 0 0 1 3 12c0-1.605.42-3.113 1.157-4.418"/></svg>
<div style="position:absolute;left:3801.63px;top:1896px;width:196.4px;height:48px;background:#eff6ff;border-radius:12px;"></div>
<div style="position:absolute;left:1818.67px;top:2122px;width:1090.67px;height:228px;background:#fff;border:2px solid #e5e7eb;border-radius:16px;box-sizing:border-box;"></div>
<svg style="position:absolute;left:1852.17px;top:2168px;" width="32" height="32" viewBox="0 0 24 24" fill="none" stroke="#3f6f8f" stroke-width="1.5" stroke-linecap="round" stroke-linejoin="round"><path d="M12 21a9.004 9.004 0 0 0 8.716-6.747M12 21a9.004 9.004 0 0 1-8.716-6.747M12 21c2.485 0 4.5-4.03 4.5-9S14.485 3 12 3m0 18c-2.485 0-4.5-4.03-4.5-9S9.515 3 12 3m0 0a8.997 8.997 0 0 1 7.843 4.582M12 3a8.997 8.997 0 0 0-7.843 4.582m15.686 0A11.953 11.953 0 0 1 12 10.5c-2.998 0-5.74-1.1-7.843-2.918m15.686 0A8.959 8.959 0 0 1 21 12c0 .778-.099 1.533-.284 2.253m0 0A17.919 17.919 0 0 1 12 16.5c-3.162 0-6.133-.815-8.716-2.247m0 0A9.015 9.015 0 0 1 3 12c0-1.605.42-3.113 1.157-4.418"/></svg>
<div style="position:absolute;left:2678.9700000000003px;top:2156px;width:196.4px;height:48px;background:#eff6ff;border-radius:12px;"></div>
<div style="position:absolute;left:2941.33px;top:2122px;width:1090.67px;height:228px;background:#fff;border:2px solid #e5e7eb;border-radius:16px;box-sizing:border-box;"></div>
<svg style="position:absolute;left:2975.93px;top:2168px;" width="32" height="32" viewBox="0 0 24 24" fill="none" stroke="#3f6f8f" stroke-width="1.5" stroke-linecap="round" stroke-linejoin="round"><path d="M12 21a9.004 9.004 0 0 0 8.716-6.747M12 21a9.004 9.004 0 0 1-8.716-6.747M12 21c2.485 0 4.5-4.03 4.5-9S14.485 3 12 3m0 18c-2.485 0-4.5-4.03-4.5-9S9.515 3 12 3m0 0a8.997 8.997 0 0 1 7.843 4.582M12 3a8.997 8.997 0 0 0-7.843 4.582m15.686 0A11.953 11.953 0 0 1 12 10.5c-2.998 0-5.74-1.1-7.843-2.918m15.686 0A8.959 8.959 0 0 1 21 12c0 .778-.099 1.533-.284 2.253m0 0A17.919 17.919 0 0 1 12 16.5c-3.162 0-6.133-.815-8.716-2.247m0 0A9.015 9.015 0 0 1 3 12c0-1.605.42-3.113 1.157-4.418"/></svg>
<div style="position:absolute;left:3801.63px;top:2156px;width:196.4px;height:48px;background:#eff6ff;border-radius:12px;"></div>
<div class="t" style="left:48.05px;top:38.35px;font-size:42.0px;font-weight:700;color:#fff;"><span style="transform:scaleX(0.9505)">Caddy Manager</span></div>
<div class="t" style="left:120.00px;top:189.11px;font-size:29.4px;font-weight:700;color:#e5e7eb;"><span style="transform:scaleX(0.9600)">Dashboard</span></div>
<div class="t" style="left:120.00px;top:277.11px;font-size:29.4px;font-weight:700;color:#e5e7eb;"><span style="transform:scaleX(0.9459)">Servers</span></div>
<div class="t" style="left:120.00px;top:365.11px;font-size:29.4px;font-weight:700;color:#fff;"><span style="transform:scaleX(0.9575)">Configurations</span></div>
<div class="t" style="left:120.00px;top:453.11px;font-size:29.4px;font-weight:700;color:#e5e7eb;"><span style="transform:scaleX(0.9121)">API Keys</span></div>
<div class="t" style="left:120.00px;top:541.11px;font-size:29.4px;font-weight:700;color:#e5e7eb;"><span style="transform:scaleX(0.9731)">User Management</span></div>
<div class="t" style="left:120.00px;top:629.11px;font-size:29.4px;font-weight:700;color:#e5e7eb;"><span style="transform:scaleX(0.9261)">Audit Logs</span></div>
<div class="t" style="left:120.00px;top:2275.11px;font-size:29.4px;font-weight:700;color:#e5e7eb;"><span style="transform:scaleX(0.9646)">Settings</span></div>
<div class="t" style="left:704.04px;top:45.11px;font-size:29.4px;font-weight:400;color:#9ca3af;"><span style="transform:scaleX(0.9617)">Search</span></div>
<div class="t" style="left:3799.40px;top:43.91px;font-size:29.4px;font-weight:700;color:#111827;"><span style="transform:scaleX(0.9580)">admin</span></div>
<div class="t" style="left:3898.02px;top:47.57px;font-size:25.2px;font-weight:700;color:#b5475a;"><span style="transform:scaleX(0.9761)">(Admin)</span></div>
<div class="t" style="left:623.98px;top:177.11px;font-size:29.4px;font-weight:400;color:#47708f;-webkit-text-stroke:0.62px currentColor;"><span style="transform:scaleX(1.0111)">Dashboard</span></div>
<div class="t" style="left:904.47px;top:177.11px;font-size:29.4px;font-weight:400;color:#47708f;-webkit-text-stroke:0.62px currentColor;"><span style="transform:scaleX(1.0297)">Configurations</span></div>
<div class="t" style="left:1235.80px;top:177.11px;font-size:29.4px;font-weight:400;color:#47708f;-webkit-text-stroke:0.62px currentColor;"><span style="transform:scaleX(1.0118)">xCave - Initial Config</span></div>
<div class="t" style="left:624.41px;top:233.39px;font-size:61.8px;font-weight:700;color:#47708f;-webkit-text-stroke:1.0px currentColor;"><span style="transform:scaleX(0.8934)">Configuration: xCave - Initial Config</span></div>
<div class="t" style="left:3370.55px;top:248.91px;font-size:29.4px;font-weight:700;color:#111827;"><span style="transform:scaleX(0.9535)">Back to Configurations</span></div>
<div class="t" style="left:3795.04px;top:248.91px;font-size:29.4px;font-weight:700;color:#fff;"><span style="transform:scaleX(0.9577)">Edit Configuration</span></div>
<div class="t" style="left:712.66px;top:371.26px;font-size:33.6px;font-weight:700;color:#000;"><span style="transform:scaleX(0.9436)">Configuration Details</span></div>
<div class="t" style="left:1647.05px;top:374.57px;font-size:25.2px;font-weight:400;color:#1a6334;-webkit-text-stroke:0.53px currentColor;"><span style="transform:scaleX(1.0535)">live</span></div>
<div class="t" style="left:672.04px;top:501.36px;font-size:33.6px;font-weight:400;color:#6b7280;"><span style="transform:scaleX(0.9790)">Pulled from server during creation</span></div>
<div class="t" style="left:672.20px;top:581.96px;font-size:33.6px;font-weight:700;color:#475569;"><span style="transform:scaleX(0.9452)">Configuration Information</span></div>
<div class="t" style="left:672.20px;top:687.46px;font-size:33.6px;font-weight:700;color:#475569;"><span style="transform:scaleX(0.9721)">Name</span></div>
<div class="t" style="left:994.50px;top:687.36px;font-size:33.6px;font-weight:400;color:#000;"><span style="transform:scaleX(0.9659)">xCave - Initial Config</span></div>
<div class="t" style="left:672.20px;top:775.56px;font-size:33.6px;font-weight:700;color:#475569;"><span style="transform:scaleX(0.9497)">Format</span></div>
<div class="t" style="left:1010.20px;top:782.67px;font-size:25.2px;font-weight:400;color:#7618cb;-webkit-text-stroke:0.53px currentColor;"><span style="transform:scaleX(1.0231)">Json</span></div>
<div class="t" style="left:672.20px;top:867.86px;font-size:33.6px;font-weight:700;color:#475569;"><span style="transform:scaleX(0.9307)">Version</span></div>
<div class="t" style="left:992.75px;top:867.86px;font-size:33.6px;font-weight:400;color:#000;"><span style="transform:scaleX(0.8749)">1.0</span></div>
<div class="t" style="left:672.20px;top:954.76px;font-size:33.6px;font-weight:700;color:#475569;"><span style="transform:scaleX(0.9282)">Tags</span></div>
<div class="t" style="left:1009.10px;top:958.67px;font-size:25.2px;font-weight:400;color:#1d4ed8;-webkit-text-stroke:0.53px currentColor;"><span style="transform:scaleX(1.0997)">initial-import</span></div>
<div class="t" style="left:672.20px;top:1051.16px;font-size:33.6px;font-weight:700;color:#475569;"><span style="transform:scaleX(0.9488)">Status Information</span></div>
<div class="t" style="left:672.20px;top:1156.36px;font-size:33.6px;font-weight:700;color:#475569;"><span style="transform:scaleX(0.9523)">Current Status</span></div>
<div class="t" style="left:1009.55px;top:1163.97px;font-size:25.2px;font-weight:400;color:#1a6334;-webkit-text-stroke:0.53px currentColor;"><span style="transform:scaleX(1.0535)">live</span></div>
<div class="t" style="left:672.20px;top:1248.56px;font-size:33.6px;font-weight:700;color:#475569;"><span style="transform:scaleX(0.9401)">Live Status</span></div>
<div class="t" style="left:1008.07px;top:1255.67px;font-size:25.2px;font-weight:400;color:#1f2937;-webkit-text-stroke:0.53px currentColor;"><span style="transform:scaleX(1.0671)">Not active</span></div>
<div class="t" style="left:672.20px;top:1341.36px;font-size:33.6px;font-weight:700;color:#475569;"><span style="transform:scaleX(0.9342)">Server Count</span></div>
<div class="t" style="left:993.11px;top:1341.36px;font-size:33.6px;font-weight:400;color:#000;"><span style="transform:scaleX(0.9474)">1 server(s)</span></div>
<div class="t" style="left:672.20px;top:1429.36px;font-size:33.6px;font-weight:700;color:#475569;"><span style="transform:scaleX(0.9413)">Configuration History</span></div>
<div class="t" style="left:672.20px;top:1535.86px;font-size:33.6px;font-weight:700;color:#475569;"><span style="transform:scaleX(0.9558)">Created On</span></div>
<div class="t" style="left:992.53px;top:1535.86px;font-size:33.6px;font-weight:400;color:#000;"><span style="transform:scaleX(0.9859)">10/05/2025, 21:40:06</span></div>
<div class="t" style="left:672.20px;top:1623.76px;font-size:33.6px;font-weight:700;color:#475569;"><span style="transform:scaleX(0.9638)">Updated On</span></div>
<div class="t" style="left:992.56px;top:1623.76px;font-size:33.6px;font-weight:400;color:#000;"><span style="transform:scaleX(0.9678)">10/05/2025, 21:41:34</span></div>
<div class="t" style="left:713.60px;top:1823.26px;font-size:33.6px;font-weight:700;color:#000;"><span style="transform:scaleX(0.9365)">Servers Using This Configuration</span></div>
<div class="t" style="left:689.00px;top:1958.71px;font-size:29.4px;font-weight:400;color:#111827;"><span style="transform:scaleX(0.9221)">xCave</span></div>
<div class="t" style="left:1644.50px;top:1959.11px;font-size:29.4px;font-weight:400;color:#b5475a;"><span style="transform:scaleX(0.9617)">View</span></div>
<div class="t" style="left:1874.85px;top:377.26px;font-size:33.6px;font-weight:700;color:#000;"><span style="transform:scaleX(0.9475)">Configuration Content</span></div>
<div class="t" style="left:3550.00px;top:380.97px;font-size:25.2px;font-weight:700;color:#fff;"><span style="transform:scaleX(0.9733)">Structured</span></div>
<div class="t" style="left:3757.50px;top:380.97px;font-size:25.2px;font-weight:700;color:#4b5563;"><span style="transform:scaleX(0.9792)">JSON</span></div>
<div class="t" style="left:3922.54px;top:380.97px;font-size:25.2px;font-weight:700;color:#1f2937;"><span style="transform:scaleX(0.9628)">Refresh</span></div>
<div class="t" style="left:1819.70px;top:497.16px;font-size:33.6px;font-weight:700;color:#47708f;"><span style="transform:scaleX(0.9374)">Sites</span></div>
<div class="t" style="left:1900.47px;top:603.36px;font-size:33.6px;font-weight:400;color:#2b4a80;-webkit-text-stroke:0.71px currentColor;"><span style="transform:scaleX(0.9975)">dashboard.some.domain</span></div>
<div class="t" style="left:2693.98px;top:606.97px;font-size:25.2px;font-weight:400;color:#1d4ed8;-webkit-text-stroke:0.53px currentColor;"><span style="transform:scaleX(0.9965)">Reverse Proxy</span></div>
<div class="t" style="left:1851.92px;top:665.41px;font-size:29.4px;font-weight:400;color:#47708f;-webkit-text-stroke:0.62px currentColor;"><span style="transform:scaleX(1.0259)">Proxy to:</span></div>
<div class="t" style="left:2011.51px;top:665.41px;font-size:29.4px;font-weight:400;color:#4b5563;"><span style="transform:scaleX(0.9801)">192.168.69.21:3000</span></div>
<div class="t" style="left:1851.92px;top:713.01px;font-size:29.4px;font-weight:400;color:#47708f;-webkit-text-stroke:0.62px currentColor;"><span style="transform:scaleX(1.0261)">Listen on:</span></div>
<div class="t" style="left:2012.06px;top:713.01px;font-size:29.4px;font-weight:400;color:#4b5563;"><span style="transform:scaleX(1.0536)">:443</span></div>
<div class="t" style="left:3022.72px;top:603.36px;font-size:33.6px;font-weight:400;color:#2b4a80;-webkit-text-stroke:0.71px currentColor;"><span style="transform:scaleX(1.0062)">portainer.some.domain</span></div>
<div class="t" style="left:3816.64px;top:606.97px;font-size:25.2px;font-weight:400;color:#1d4ed8;-webkit-text-stroke:0.53px currentColor;"><span style="transform:scaleX(0.9965)">Reverse Proxy</span></div>
<div class="t" style="left:2974.58px;top:665.41px;font-size:29.4px;font-weight:400;color:#47708f;-webkit-text-stroke:0.62px currentColor;"><span style="transform:scaleX(1.0259)">Proxy to:</span></div>
<div class="t" style="left:3134.17px;top:665.41px;font-size:29.4px;font-weight:400;color:#4b5563;"><span style="transform:scaleX(0.9801)">192.168.69.21:9000</span></div>
<div class="t" style="left:2974.58px;top:713.01px;font-size:29.4px;font-weight:400;color:#47708f;-webkit-text-stroke:0.62px currentColor;"><span style="transform:scaleX(1.0261)">Listen on:</span></div>
<div class="t" style="left:3134.72px;top:713.01px;font-size:29.4px;font-weight:400;color:#4b5563;"><span style="transform:scaleX(1.0536)">:443</span></div>
<div class="t" style="left:1900.47px;top:863.36px;font-size:33.6px;font-weight:400;color:#2b4a80;-webkit-text-stroke:0.71px currentColor;"><span style="transform:scaleX(0.9983)">overseerr.some.domain</span></div>
<div class="t" style="left:2693.98px;top:866.97px;font-size:25.2px;font-weight:400;color:#1d4ed8;-webkit-text-stroke:0.53px currentColor;"><span style="transform:scaleX(0.9965)">Reverse Proxy</span></div>
<div class="t" style="left:1851.92px;top:925.41px;font-size:29.4px;font-weight:400;color:#47708f;-webkit-text-stroke:0.62px currentColor;"><span style="transform:scaleX(1.0259)">Proxy to:</span></div>
<div class="t" style="left:2011.51px;top:925.41px;font-size:29.4px;font-weight:400;color:#4b5563;"><span style="transform:scaleX(0.9801)">192.168.69.18:5055</span></div>
<div class="t" style="left:1851.92px;top:973.01px;font-size:29.4px;font-weight:400;color:#47708f;-webkit-text-stroke:0.62px currentColor;"><span style="transform:scaleX(1.0261)">Listen on:</span></div>
<div class="t" style="left:2012.06px;top:973.01px;font-size:29.4px;font-weight:400;color:#4b5563;"><span style="transform:scaleX(1.0536)">:443</span></div>
<div class="t" style="left:3016.73px;top:863.36px;font-size:33.6px;font-weight:400;color:#2b4a80;-webkit-text-stroke:0.71px currentColor;"><span style="transform:scaleX(0.9855)">some.domain</span></div>
<div class="t" style="left:3816.64px;top:866.97px;font-size:25.2px;font-weight:400;color:#1d4ed8;-webkit-text-stroke:0.53px currentColor;"><span style="transform:scaleX(0.9965)">Reverse Proxy</span></div>
<div class="t" style="left:2974.58px;top:925.41px;font-size:29.4px;font-weight:400;color:#47708f;-webkit-text-stroke:0.62px currentColor;"><span style="transform:scaleX(1.0259)">Proxy to:</span></div>
<div class="t" style="left:3134.17px;top:925.41px;font-size:29.4px;font-weight:400;color:#4b5563;"><span style="transform:scaleX(0.9789)">192.168.69.18:25565</span></div>
<div class="t" style="left:2974.58px;top:973.01px;font-size:29.4px;font-weight:400;color:#47708f;-webkit-text-stroke:0.62px currentColor;"><span style="transform:scaleX(1.0261)">Listen on:</span></div>
<div class="t" style="left:3134.72px;top:973.01px;font-size:29.4px;font-weight:400;color:#4b5563;"><span style="transform:scaleX(1.0536)">:443</span></div>
<div class="t" style="left:1899.43px;top:1123.36px;font-size:33.6px;font-weight:400;color:#2b4a80;-webkit-text-stroke:0.71px currentColor;"><span style="transform:scaleX(1.0207)">prowlarr.</span></div>
<div class="t" style="left:2693.98px;top:1126.97px;font-size:25.2px;font-weight:400;color:#1d4ed8;-webkit-text-stroke:0.53px currentColor;"><span style="transform:scaleX(0.9965)">Reverse Proxy</span></div>
<div class="t" style="left:1851.92px;top:1185.41px;font-size:29.4px;font-weight:400;color:#47708f;-webkit-text-stroke:0.62px currentColor;"><span style="transform:scaleX(1.0259)">Proxy to:</span></div>
<div class="t" style="left:2011.51px;top:1185.41px;font-size:29.4px;font-weight:400;color:#4b5563;"><span style="transform:scaleX(0.9801)">192.168.69.18:9696</span></div>
<div class="t" style="left:1851.92px;top:1233.01px;font-size:29.4px;font-weight:400;color:#47708f;-webkit-text-stroke:0.62px currentColor;"><span style="transform:scaleX(1.0261)">Listen on:</span></div>
<div class="t" style="left:2012.06px;top:1233.01px;font-size:29.4px;font-weight:400;color:#4b5563;"><span style="transform:scaleX(1.0536)">:443</span></div>
<div class="t" style="left:3024.73px;top:1123.36px;font-size:33.6px;font-weight:400;color:#2b4a80;-webkit-text-stroke:0.71px currentColor;"><span style="transform:scaleX(1.0330)">tautulli.</span></div>
<div class="t" style="left:3816.64px;top:1126.97px;font-size:25.2px;font-weight:400;color:#1d4ed8;-webkit-text-stroke:0.53px currentColor;"><span style="transform:scaleX(0.9965)">Reverse Proxy</span></div>
<div class="t" style="left:2974.58px;top:1185.41px;font-size:29.4px;font-weight:400;color:#47708f;-webkit-text-stroke:0.62px currentColor;"><span style="transform:scaleX(1.0259)">Proxy to:</span></div>
<div class="t" style="left:3134.20px;top:1185.41px;font-size:29.4px;font-weight:400;color:#4b5563;"><span style="transform:scaleX(0.9661)">192.168.69.18:8081</span></div>
<div class="t" style="left:2974.58px;top:1233.01px;font-size:29.4px;font-weight:400;color:#47708f;-webkit-text-stroke:0.62px currentColor;"><span style="transform:scaleX(1.0261)">Listen on:</span></div>
<div class="t" style="left:3134.72px;top:1233.01px;font-size:29.4px;font-weight:400;color:#4b5563;"><span style="transform:scaleX(1.0536)">:443</span></div>
<div class="t" style="left:1900.49px;top:1383.36px;font-size:33.6px;font-weight:400;color:#2b4a80;-webkit-text-stroke:0.71px currentColor;"><span style="transform:scaleX(0.9805)">grafana</span></div>
<div class="t" style="left:2693.98px;top:1386.97px;font-size:25.2px;font-weight:400;color:#1d4ed8;-webkit-text-stroke:0.53px currentColor;"><span style="transform:scaleX(0.9965)">Reverse Proxy</span></div>
<div class="t" style="left:1851.92px;top:1445.41px;font-size:29.4px;font-weight:400;color:#47708f;-webkit-text-stroke:0.62px currentColor;"><span style="transform:scaleX(1.0259)">Proxy to:</span></div>
<div class="t" style="left:2011.54px;top:1445.41px;font-size:29.4px;font-weight:400;color:#4b5563;"><span style="transform:scaleX(0.9661)">192.168.69.21:3031</span></div>
<div class="t" style="left:1851.92px;top:1493.01px;font-size:29.4px;font-weight:400;color:#47708f;-webkit-text-stroke:0.62px currentColor;"><span style="transform:scaleX(1.0261)">Listen on:</span></div>
<div class="t" style="left:2012.06px;top:1493.01px;font-size:29.4px;font-weight:400;color:#4b5563;"><span style="transform:scaleX(1.0536)">:443</span></div>
<div class="t" style="left:3024.73px;top:1383.36px;font-size:33.6px;font-weight:400;color:#2b4a80;-webkit-text-stroke:0.71px currentColor;width:85.00px;overflow:hidden;height:43.7px;"><span style="transform:scaleX(0.9900)">status.</span></div>
<div class="t" style="left:3816.64px;top:1386.97px;font-size:25.2px;font-weight:400;color:#1d4ed8;-webkit-text-stroke:0.53px currentColor;"><span style="transform:scaleX(0.9965)">Reverse Proxy</span></div>
<div class="t" style="left:2974.58px;top:1445.41px;font-size:29.4px;font-weight:400;color:#47708f;-webkit-text-stroke:0.62px currentColor;"><span style="transform:scaleX(1.0259)">Proxy to:</span></div>
<div class="t" style="left:3134.20px;top:1445.41px;font-size:29.4px;font-weight:400;color:#4b5563;"><span style="transform:scaleX(0.9661)">192.168.69.21:3001</span></div>
<div class="t" style="left:2974.58px;top:1493.01px;font-size:29.4px;font-weight:400;color:#47708f;-webkit-text-stroke:0.62px currentColor;"><span style="transform:scaleX(1.0261)">Listen on:</span></div>
<div class="t" style="left:3134.72px;top:1493.01px;font-size:29.4px;font-weight:400;color:#4b5563;"><span style="transform:scaleX(1.0536)">:443</span></div>
<div class="t" style="left:1899.49px;top:1643.36px;font-size:33.6px;font-weight:400;color:#2b4a80;-webkit-text-stroke:0.71px currentColor;width:92.98px;overflow:hidden;height:43.7px;"><span style="transform:scaleX(0.9900)">radarr.s</span></div>
<div class="t" style="left:2693.98px;top:1646.97px;font-size:25.2px;font-weight:400;color:#1d4ed8;-webkit-text-stroke:0.53px currentColor;"><span style="transform:scaleX(0.9965)">Reverse Proxy</span></div>
<div class="t" style="left:1851.92px;top:1705.41px;font-size:29.4px;font-weight:400;color:#47708f;-webkit-text-stroke:0.62px currentColor;"><span style="transform:scaleX(1.0259)">Proxy to:</span></div>
<div class="t" style="left:2011.53px;top:1705.41px;font-size:29.4px;font-weight:400;color:#4b5563;"><span style="transform:scaleX(0.9685)">192.168.69.18:7878</span></div>
<div class="t" style="left:1851.92px;top:1753.01px;font-size:29.4px;font-weight:400;color:#47708f;-webkit-text-stroke:0.62px currentColor;"><span style="transform:scaleX(1.0261)">Listen on:</span></div>
<div class="t" style="left:2012.06px;top:1753.01px;font-size:29.4px;font-weight:400;color:#4b5563;"><span style="transform:scaleX(1.0536)">:443</span></div>
<div class="t" style="left:3024.73px;top:1643.36px;font-size:33.6px;font-weight:400;color:#2b4a80;-webkit-text-stroke:0.71px currentColor;width:97.60px;overflow:hidden;height:43.7px;"><span style="transform:scaleX(0.9900)">sonarr.s</span></div>
<div class="t" style="left:3816.64px;top:1646.97px;font-size:25.2px;font-weight:400;color:#1d4ed8;-webkit-text-stroke:0.53px currentColor;"><span style="transform:scaleX(0.9965)">Reverse Proxy</span></div>
<div class="t" style="left:2974.58px;top:1705.41px;font-size:29.4px;font-weight:400;color:#47708f;-webkit-text-stroke:0.62px currentColor;"><span style="transform:scaleX(1.0259)">Proxy to:</span></div>
<div class="t" style="left:3134.16px;top:1705.41px;font-size:29.4px;font-weight:400;color:#4b5563;"><span style="transform:scaleX(0.9839)">192.168.69.18:8989</span></div>
<div class="t" style="left:2974.58px;top:1753.01px;font-size:29.4px;font-weight:400;color:#47708f;-webkit-text-stroke:0.62px currentColor;"><span style="transform:scaleX(1.0261)">Listen on:</span></div>
<div class="t" style="left:3134.72px;top:1753.01px;font-size:29.4px;font-weight:400;color:#4b5563;"><span style="transform:scaleX(1.0536)">:443</span></div>
<div class="t" style="left:1899.49px;top:1903.36px;font-size:33.6px;font-weight:400;color:#2b4a80;-webkit-text-stroke:0.71px currentColor;width:94.38px;overflow:hidden;height:43.7px;"><span style="transform:scaleX(0.9900)">bazarr.</span></div>
<div class="t" style="left:2693.98px;top:1906.97px;font-size:25.2px;font-weight:400;color:#1d4ed8;-webkit-text-stroke:0.53px currentColor;"><span style="transform:scaleX(0.9965)">Reverse Proxy</span></div>
<div class="t" style="left:1851.92px;top:1965.41px;font-size:29.4px;font-weight:400;color:#47708f;-webkit-text-stroke:0.62px currentColor;"><span style="transform:scaleX(1.0259)">Proxy to:</span></div>
<div class="t" style="left:2011.53px;top:1965.41px;font-size:29.4px;font-weight:400;color:#4b5563;"><span style="transform:scaleX(0.9723)">192.168.69.21:6767</span></div>
<div class="t" style="left:1851.92px;top:2013.01px;font-size:29.4px;font-weight:400;color:#47708f;-webkit-text-stroke:0.62px currentColor;"><span style="transform:scaleX(1.0261)">Listen on:</span></div>
<div class="t" style="left:2012.06px;top:2013.01px;font-size:29.4px;font-weight:400;color:#4b5563;"><span style="transform:scaleX(1.0536)">:443</span></div>
<div class="t" style="left:3025.72px;top:1903.36px;font-size:33.6px;font-weight:400;color:#2b4a80;-webkit-text-stroke:0.71px currentColor;width:83.41px;overflow:hidden;height:43.7px;"><span style="transform:scaleX(0.9900)">wizarr.</span></div>
<div class="t" style="left:3816.64px;top:1906.97px;font-size:25.2px;font-weight:400;color:#1d4ed8;-webkit-text-stroke:0.53px currentColor;"><span style="transform:scaleX(0.9965)">Reverse Proxy</span></div>
<div class="t" style="left:2974.58px;top:1965.41px;font-size:29.4px;font-weight:400;color:#47708f;-webkit-text-stroke:0.62px currentColor;"><span style="transform:scaleX(1.0259)">Proxy to:</span></div>
<div class="t" style="left:3134.17px;top:1965.41px;font-size:29.4px;font-weight:400;color:#4b5563;"><span style="transform:scaleX(0.9801)">192.168.69.21:5690</span></div>
<div class="t" style="left:2974.58px;top:2013.01px;font-size:29.4px;font-weight:400;color:#47708f;-webkit-text-stroke:0.62px currentColor;"><span style="transform:scaleX(1.0261)">Listen on:</span></div>
<div class="t" style="left:3134.72px;top:2013.01px;font-size:29.4px;font-weight:400;color:#4b5563;"><span style="transform:scaleX(1.0536)">:443</span></div>
<div class="t" style="left:1899.49px;top:2163.36px;font-size:33.6px;font-weight:400;color:#2b4a80;-webkit-text-stroke:0.71px currentColor;width:114.98px;overflow:hidden;height:43.7px;"><span style="transform:scaleX(0.9900)">planka.xc</span></div>
<div class="t" style="left:2693.98px;top:2166.97px;font-size:25.2px;font-weight:400;color:#1d4ed8;-webkit-text-stroke:0.53px currentColor;"><span style="transform:scaleX(0.9965)">Reverse Proxy</span></div>
<div class="t" style="left:1851.92px;top:2225.41px;font-size:29.4px;font-weight:400;color:#47708f;-webkit-text-stroke:0.62px currentColor;"><span style="transform:scaleX(1.0259)">Proxy to:</span></div>
<div class="t" style="left:2011.54px;top:2225.41px;font-size:29.4px;font-weight:400;color:#4b5563;"><span style="transform:scaleX(0.9661)">192.168.69.21:3081</span></div>
<div class="t" style="left:1851.92px;top:2273.01px;font-size:29.4px;font-weight:400;color:#47708f;-webkit-text-stroke:0.62px currentColor;"><span style="transform:scaleX(1.0261)">Listen on:</span></div>
<div class="t" style="left:2012.06px;top:2273.01px;font-size:29.4px;font-weight:400;color:#4b5563;"><span style="transform:scaleX(1.0536)">:443</span></div>
<div class="t" style="left:3022.75px;top:2163.36px;font-size:33.6px;font-weight:400;color:#2b4a80;-webkit-text-stroke:0.71px currentColor;width:111.18px;overflow:hidden;height:43.7px;"><span style="transform:scaleX(0.9900)">penpot.s</span></div>
<div class="t" style="left:3816.64px;top:2166.97px;font-size:25.2px;font-weight:400;color:#1d4ed8;-webkit-text-stroke:0.53px currentColor;"><span style="transform:scaleX(0.9965)">Reverse Proxy</span></div>
<div class="t" style="left:2974.58px;top:2225.41px;font-size:29.4px;font-weight:400;color:#47708f;-webkit-text-stroke:0.62px currentColor;"><span style="transform:scaleX(1.0259)">Proxy to:</span></div>
<div class="t" style="left:3134.17px;top:2225.41px;font-size:29.4px;font-weight:400;color:#4b5563;"><span style="transform:scaleX(0.9801)">192.168.69.18:9046</span></div>
<div class="t" style="left:2974.58px;top:2273.01px;font-size:29.4px;font-weight:400;color:#47708f;-webkit-text-stroke:0.62px currentColor;"><span style="transform:scaleX(1.0261)">Listen on:</span></div>
<div class="t" style="left:3134.72px;top:2273.01px;font-size:29.4px;font-weight:400;color:#4b5563;"><span style="transform:scaleX(1.0536)">:443</span></div>
<div style="position:absolute;left:4030px;top:2314px;width:64px;height:120px;background:#141414;border-radius:32px;box-shadow:0 0 16px rgba(0,0,0,.25);"></div>
<svg style="position:absolute;left:4048px;top:2333px" width="28.3" height="24.4" viewBox="0 0 256 221"><path fill="#8a8a8a" d="M204.8 0H256L128 220.8 0 0h97.92L128 51.2 157.44 0h47.36Z"/><path fill="#444" d="M50.56 0L128 133.12 204.8 0h-47.36L128 51.2 97.92 0H50.56Z"/></svg>
</div></body></html>
